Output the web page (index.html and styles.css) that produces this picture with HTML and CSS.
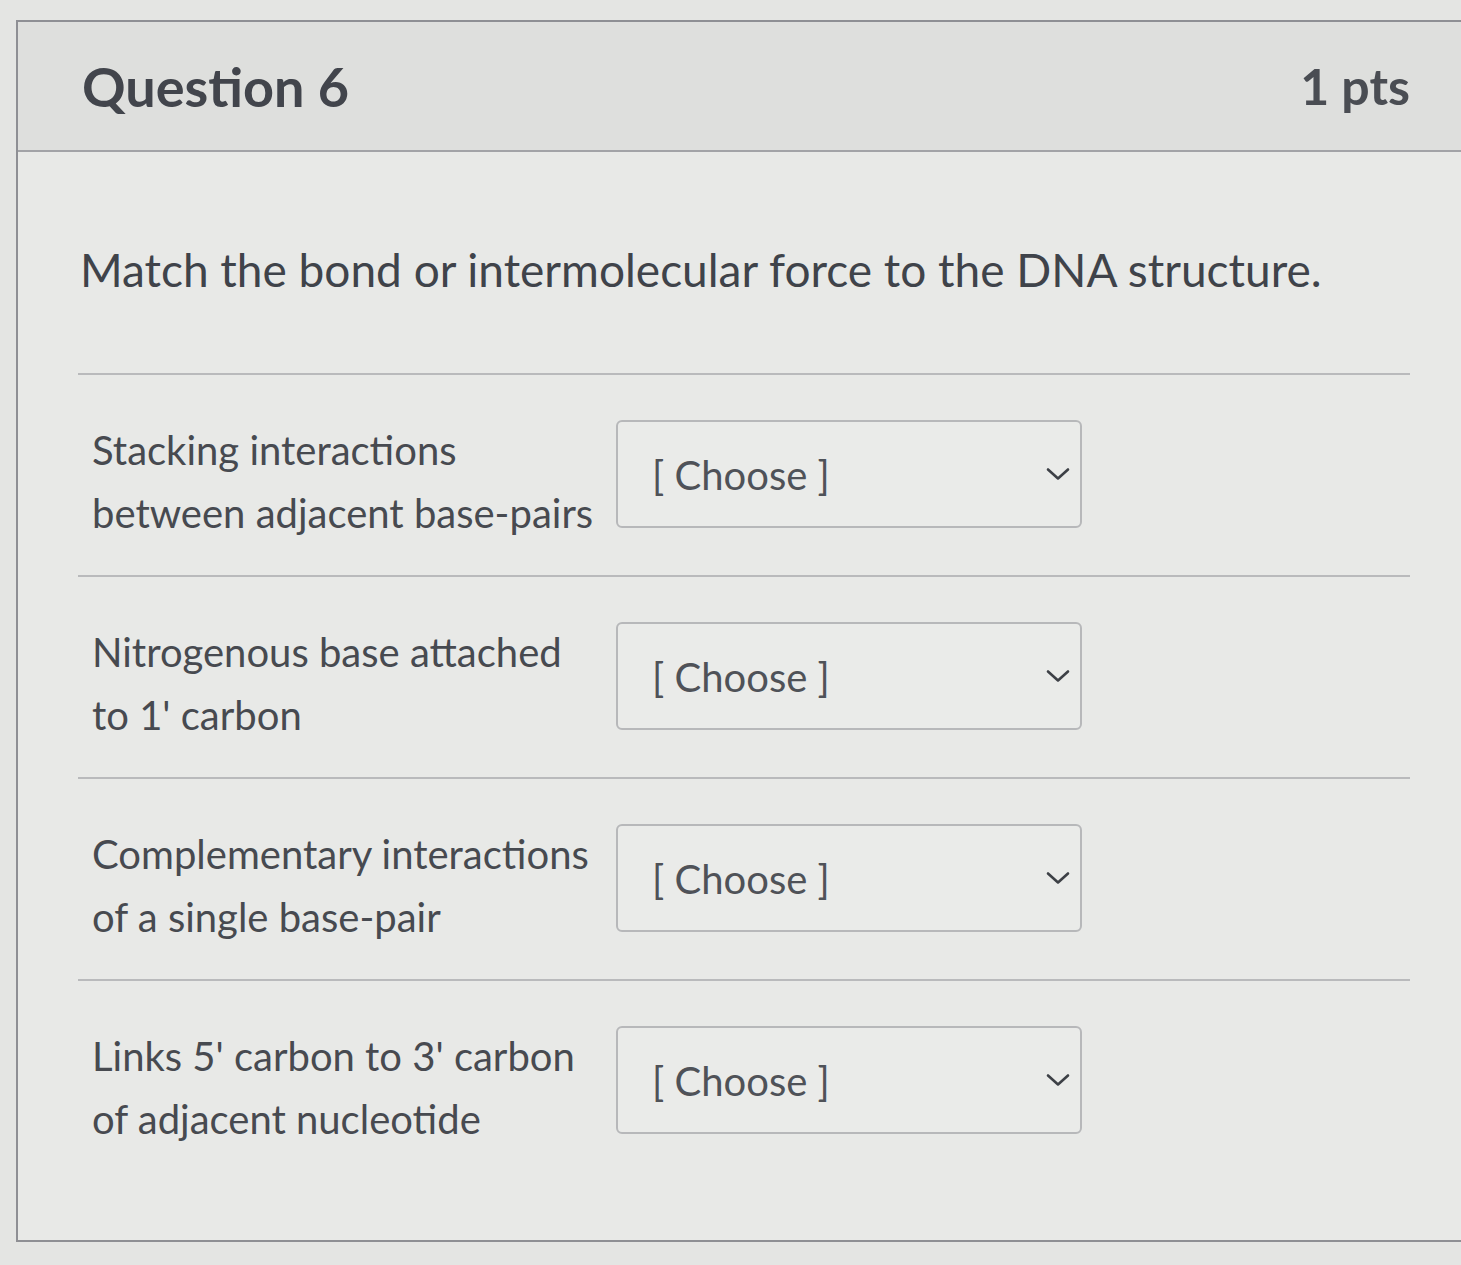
FILE: index.html
```html
<!DOCTYPE html>
<html lang="en">
<head>
    <meta charset="UTF-8">
    <title>Question 6</title>
    <link rel="stylesheet" href="styles.css">
</head>
<body>

    <div class="question">
        <div class="question-header">
            <h2>Question 6</h2>
            <span class="points">1 pts</span>
        </div>

        <div class="question-body">
            <p class="question-text">Match the bond or intermolecular force to the DNA structure.</p>

            <div class="answers">
                <div class="answer-row">
                    <div class="answer-label">Stacking interactions between adjacent base-pairs</div>
                    <div class="select-box">
                        <span>[ Choose ]</span>
                        <svg class="chevron" viewBox="0 0 24 14"><polyline points="2,2 12,11 22,2"/></svg>
                    </div>
                </div>
                <div class="answer-row">
                    <div class="answer-label">Nitrogenous base attached to 1' carbon</div>
                    <div class="select-box">
                        <span>[ Choose ]</span>
                        <svg class="chevron" viewBox="0 0 24 14"><polyline points="2,2 12,11 22,2"/></svg>
                    </div>
                </div>
                <div class="answer-row">
                    <div class="answer-label">Complementary interactions of a single base-pair</div>
                    <div class="select-box">
                        <span>[ Choose ]</span>
                        <svg class="chevron" viewBox="0 0 24 14"><polyline points="2,2 12,11 22,2"/></svg>
                    </div>
                </div>
                <div class="answer-row">
                    <div class="answer-label">Links 5' carbon to 3' carbon of adjacent nucleotide</div>
                    <div class="select-box">
                        <span>[ Choose ]</span>
                        <svg class="chevron" viewBox="0 0 24 14"><polyline points="2,2 12,11 22,2"/></svg>
                    </div>
                </div>
            </div>
        </div>
    </div>

</body>
</html>
```

FILE: styles.css
```css
* {
    margin: 0;
    padding: 0;
    box-sizing: border-box;
}

body {
    background: #e4e5e3;
    font-family: Lato, "Open Sans", sans-serif;
    color: #3d4148;
    overflow: hidden;
}

.question {
    margin: 20px -20px 0 16px;
    border: 2px solid #8e8f94;
    border-right: none;
    height: 1222px;
    background: #e8e9e7;
}

.question-header {
    height: 130px;
    background: #dedfdd;
    border-bottom: 2px solid #a2a3a7;
    display: flex;
    justify-content: space-between;
    align-items: center;
    padding: 0 71px 0 64px;
}

.question-header h2 {
    font-size: 54px;
    font-weight: 700;
    color: #42454c;
}

.points {
    font-size: 50px;
    font-weight: 700;
    color: #4a4d53;
}

.question-body {
    padding: 90px 71px 0 62px;
}

.question-text {
    font-size: 46px;
    color: #3f434a;
    line-height: 1.2;
    margin-bottom: 76px;
}

.answers {
    margin-left: -2px;
}

.answer-row {
    border-top: 2px solid #b9babc;
    height: 202px;
    display: flex;
    align-items: flex-start;
    padding-top: 45px;
}

.answer-label {
    width: 538px;
    padding-left: 14px;
    padding-right: 10px;
    font-size: 40px;
    line-height: 63px;
    color: #474a50;
    margin-top: -1px;
}

.select-box {
    width: 466px;
    height: 108px;
    border: 2px solid #b7b8ba;
    border-radius: 6px;
    display: flex;
    align-items: center;
    justify-content: space-between;
    padding: 0 10px 0 34px;
    font-size: 40px;
    color: #4f5258;
    background: #eaebe9;
}

.select-box span {
    margin-top: 2px;
}

.chevron {
    width: 24px;
    height: 15px;
}

.chevron polyline {
    fill: none;
    stroke: #3d4046;
    stroke-width: 2.6;
    stroke-linecap: round;
    stroke-linejoin: round;
}
```
